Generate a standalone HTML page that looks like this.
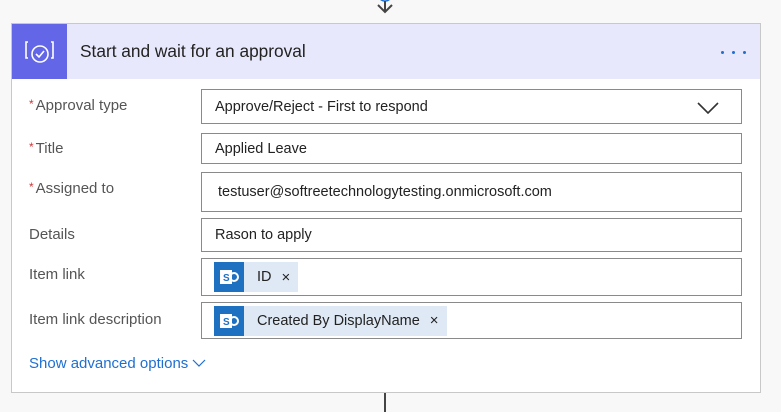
<!DOCTYPE html>
<html><head><meta charset="utf-8"><style>
*{box-sizing:border-box;margin:0;padding:0}
body{width:781px;height:412px;background:#f8f8f8;font-family:"Liberation Sans",sans-serif;position:relative;overflow:hidden;color:#333}
.card{position:absolute;left:11px;top:23px;width:750px;height:370px;background:#fff;border:1px solid #c8c8c8}
.hdr{position:absolute;left:0;top:0;width:748px;height:55px;background:#e8e8fc}
.ico{position:absolute;left:0;top:0;width:55px;height:55px;background:#6366e6}
.ttl{position:absolute;left:68px;top:17px;font-size:17.3px;color:#222}
.dot{position:absolute;top:27px;width:3px;height:3px;border-radius:50%;background:#1f6fd1}
.lbl{position:absolute;left:17px;font-size:15px;color:#555}
.lbl b{color:#d13438;font-weight:normal;font-size:12px;vertical-align:2px;margin-right:2px}
.inp{position:absolute;left:189px;width:541px;border:1px solid #8a8a8a;font-size:14.5px;color:#222;padding-left:13px;display:flex;align-items:center}
.tok{display:flex;align-items:center;background:#dfe9f5;height:30px;margin-left:-1px}
.sp{width:30px;height:30px;background:#1e70c1;display:flex;align-items:center;justify-content:center}
.x{font-size:15px;margin:0 8px 0 10px}
</style></head><body>
<div style="position:absolute;left:385px;top:0;width:1px;height:18px">
<svg style="position:absolute;left:-12px;top:-10px" width="24" height="34"><circle cx="12" cy="4" r="7" fill="none" stroke="#1f6fd1" stroke-width="1.5"/><path d="M12 11V22M5 15l7 7 7-7" fill="none" stroke="#444" stroke-width="2"/></svg></div>
<div style="position:absolute;left:384px;top:393px;width:2px;height:19px;background:#444"></div>
<div class="card">
<div class="hdr"><div class="ico"><svg width="55" height="55"><path d="M16 18h-2v16h2M39 18h2v16h-2" fill="none" stroke="#fff" stroke-width="1.6"/><circle cx="28" cy="30" r="8" fill="none" stroke="#fff" stroke-width="1.6"/><path d="M24 30l3 3 5-6" fill="none" stroke="#fff" stroke-width="1.6"/></svg></div>
<div class="ttl">Start and wait for an approval</div>
<div class="dot" style="left:709px"></div><div class="dot" style="left:720px"></div><div class="dot" style="left:731px"></div></div>
<div class="lbl" style="top:73px"><b>*</b>Approval type</div>
<div class="inp" style="top:65px;height:35px">Approve/Reject - First to respond<svg style="position:absolute;right:22px;top:12px" width="22" height="12"><path d="M1 1l10 10 10-10" fill="none" stroke="#333" stroke-width="1.6"/></svg></div>
<div class="lbl" style="top:116px"><b>*</b>Title</div>
<div class="inp" style="top:109px;height:31px">Applied Leave</div>
<div class="lbl" style="top:156px"><b>*</b>Assigned to</div>
<div class="inp" style="top:148px;height:40px;padding-left:16px">testuser@softreetechnologytesting.onmicrosoft.com</div>
<div class="lbl" style="top:202px">Details</div>
<div class="inp" style="top:194px;height:34px">Rason to apply</div>
<div class="lbl" style="top:242px">Item link</div>
<div class="inp" style="top:234px;height:38px"><div class="tok"><div class="sp"><svg width="20" height="18"><rect x="1" y="2" width="12" height="14" fill="#fff"/><text x="4" y="13" font-size="10" font-family="Liberation Sans" fill="#1e70c1" font-weight="bold">S</text><circle cx="15" cy="9" r="4" fill="none" stroke="#fff" stroke-width="2"/></svg></div><span style="margin-left:13px">ID</span><span class="x">×</span></div></div>
<div class="lbl" style="top:287px">Item link description</div>
<div class="inp" style="top:278px;height:37px"><div class="tok"><div class="sp"><svg width="20" height="18"><rect x="1" y="2" width="12" height="14" fill="#fff"/><text x="4" y="13" font-size="10" font-family="Liberation Sans" fill="#1e70c1" font-weight="bold">S</text><circle cx="15" cy="9" r="4" fill="none" stroke="#fff" stroke-width="2"/></svg></div><span style="margin-left:13px">Created By DisplayName</span><span class="x">×</span></div></div>
<div style="position:absolute;left:17px;top:331px;font-size:15px;color:#1f6fd1">Show advanced options <svg width="14" height="9"><path d="M1 1l6 6 6-6" fill="none" stroke="#1f6fd1" stroke-width="1.2"/></svg></div>
</div>
</body></html>
